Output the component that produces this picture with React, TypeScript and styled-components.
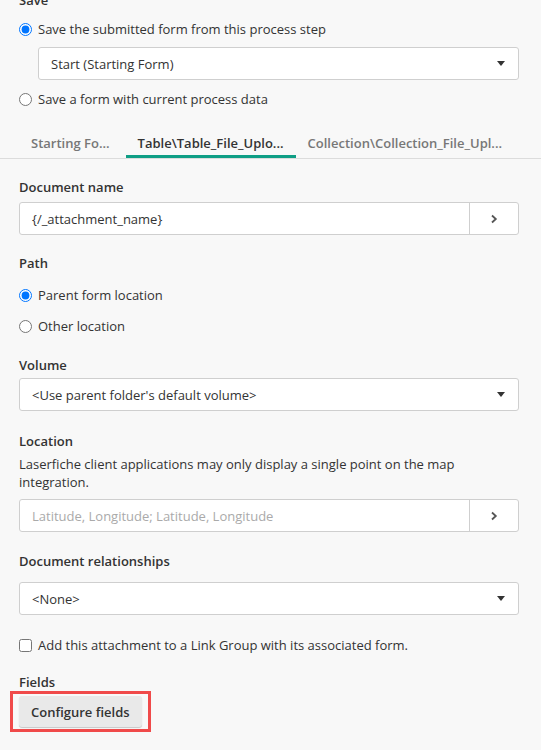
import React from 'react';
import styled, { createGlobalStyle } from 'styled-components';

const GlobalStyle = createGlobalStyle`
  html, body {
    margin: 0;
    padding: 0;
    background: #f8f8f8;
  }
  body {
    font-family: 'Open Sans', 'Noto Sans', sans-serif;
    font-size: 13px;
    color: #333;
  }
`;

const Page = styled.div`
  padding: 0 22px 20px 19px;
  margin-top: -9px;
`;

const Label = styled.div<{ $gap?: number }>`
  font-weight: 600;
  line-height: 18px;
  margin-bottom: ${p => p.$gap ?? 5}px;
`;

const Section = styled.div<{ $top?: number }>`
  margin-top: ${p => p.$top ?? 20}px;
`;

const OptionRow = styled.label<{ $top?: number }>`
  display: flex;
  align-items: center;
  gap: 6px;
  line-height: 18px;
  margin-top: ${p => p.$top ?? 0}px;

  input {
    margin: 0;
    width: 13px;
    height: 13px;
    accent-color: #0075ff;
  }
`;

const Indented = styled.div`
  padding-left: 19px;
  margin-top: 9px;
`;

const SelectBox = styled.div`
  height: 33px;
  box-sizing: border-box;
  border: 1px solid #cfcfcf;
  border-radius: 3px;
  background: #fff;
  display: flex;
  align-items: center;
  justify-content: space-between;
  padding: 0 12px;
`;

const Caret = styled.span`
  width: 0;
  height: 0;
  border-left: 4.5px solid transparent;
  border-right: 4.5px solid transparent;
  border-top: 5px solid #333;
  margin-right: 1px;
`;

const InputGroup = styled.div`
  height: 33px;
  box-sizing: border-box;
  border: 1px solid #cfcfcf;
  border-radius: 3px;
  background: #fff;
  display: flex;
`;

const InputText = styled.div<{ $placeholder?: boolean }>`
  flex: 1;
  display: flex;
  align-items: center;
  padding: 0 12px;
  color: ${p => (p.$placeholder ? '#aaa' : '#333')};
`;

const AddonButton = styled.div`
  width: 48px;
  border-left: 1px solid #cfcfcf;
  display: flex;
  align-items: center;
  justify-content: center;
  color: #555;
`;

const TabList = styled.div`
  display: flex;
  margin: 26px -22px 0 -19px;
  padding-left: 19px;
  border-bottom: 1px solid #dcdcdc;
`;

const Tab = styled.div<{ $active?: boolean }>`
  padding: 0 12px 3px;
  line-height: 18px;
  font-weight: 600;
  white-space: nowrap;
  margin-right: ${p => (p.$active ? 0 : 4)}px;
  color: ${p => (p.$active ? '#333' : '#777')};
  border-bottom: 3px solid ${p => (p.$active ? '#0f9e85' : 'transparent')};
`;

const Description = styled.div`
  line-height: 17.5px;
  margin-bottom: 8px;
  padding-right: 30px;
`;

const Highlight = styled.div`
  display: inline-block;
  border: 3px solid #f04a4a;
  padding: 2px 6px;
  margin-left: -9px;
`;

const Button = styled.button`
  font-family: inherit;
  font-size: 13px;
  font-weight: 600;
  color: #333;
  height: 31px;
  padding: 0 12px;
  background: #e9e9e9;
  border: none;
  border-radius: 3px;
  box-shadow: 0 1px 1px rgba(0, 0, 0, 0.2);
  display: block;
`;

const Chevron = () => (
  <svg width="10" height="10" viewBox="0 0 10 10">
    <path d="M3 1.5 L6.8 5 L3 8.5" fill="none" stroke="#555" strokeWidth="1.8" />
  </svg>
);

const App = () => {
  return (
    <>
      <GlobalStyle />
      <Page>
        <Label $gap={11}>Save</Label>
        <OptionRow>
          <input type="radio" name="save" defaultChecked />
          Save the submitted form from this process step
        </OptionRow>
        <Indented>
          <SelectBox>
            Start (Starting Form)
            <Caret />
          </SelectBox>
        </Indented>
        <OptionRow $top={10}>
          <input type="radio" name="save" />
          Save a form with current process data
        </OptionRow>

        <TabList>
          <Tab>Starting Fo...</Tab>
          <Tab $active>Table\Table_File_Uplo...</Tab>
          <Tab>Collection\Collection_File_Upl...</Tab>
        </TabList>

        <Section $top={19}>
          <Label $gap={6}>Document name</Label>
          <InputGroup>
            <InputText>{'{/_attachment_name}'}</InputText>
            <AddonButton>
              <Chevron />
            </AddonButton>
          </InputGroup>
        </Section>

        <Section $top={19}>
          <Label $gap={14}>Path</Label>
          <OptionRow>
            <input type="radio" name="path" defaultChecked />
            Parent form location
          </OptionRow>
          <OptionRow $top={13}>
            <input type="radio" name="path" />
            Other location
          </OptionRow>
        </Section>

        <Section $top={21}>
          <Label $gap={4}>Volume</Label>
          <SelectBox>
            {"<Use parent folder's default volume>"}
            <Caret />
          </SelectBox>
        </Section>

        <Section $top={21}>
          <Label $gap={6}>Location</Label>
          <Description>
            Laserfiche client applications may only display a single point on the map integration.
          </Description>
          <InputGroup>
            <InputText $placeholder>Latitude, Longitude; Latitude, Longitude</InputText>
            <AddonButton>
              <Chevron />
            </AddonButton>
          </InputGroup>
        </Section>

        <Section $top={20}>
          <Label $gap={12}>Document relationships</Label>
          <SelectBox>
            {'<None>'}
            <Caret />
          </SelectBox>
        </Section>

        <Section $top={21}>
          <OptionRow>
            <input type="checkbox" />
            Add this attachment to a Link Group with its associated form.
          </OptionRow>
        </Section>

        <Section $top={19}>
          <Label $gap={0}>Fields</Label>
          <Highlight>
            <Button>Configure fields</Button>
          </Highlight>
        </Section>
      </Page>
    </>
  );
};

export default App;
